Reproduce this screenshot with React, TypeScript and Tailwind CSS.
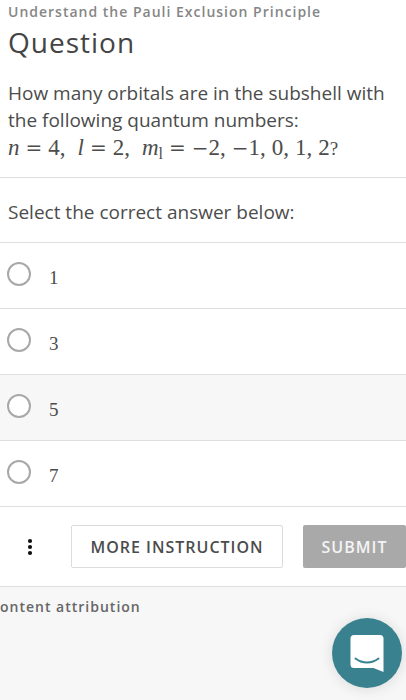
import React, { useState } from 'react';

const answers = ['1', '3', '5', '7'];

const Op: React.FC<{ children: React.ReactNode }> = ({ children }) => (
  <span className="font-['DejaVu_Serif',serif] text-[20px] leading-none">{children}</span>
);

const Quantum: React.FC<{ name: React.ReactNode; children: React.ReactNode }> = ({ name, children }) => (
  <span className="flex items-baseline gap-1.5">
    <span>{name}</span>
    <Op>=</Op>
    <span className="flex items-baseline gap-1.5">{children}</span>
  </span>
);

const App: React.FC = () => {
  const [selected, setSelected] = useState<string | null>(null);

  return (
    <div className="flex min-h-screen flex-col overflow-x-hidden bg-white font-['Open_Sans','Noto_Sans',sans-serif] text-[#4c4c4c]">
      <header className="px-2 pt-1">
        <p className="text-sm leading-4 font-semibold tracking-[1px] text-[#868686]">Understand the Pauli Exclusion Principle</p>
        <h1 className="pt-1 text-[28px] leading-9 tracking-[1px] text-[#444]">Question</h1>
      </header>

      <main>
        <div className="border-b border-[#dedede] px-2 pt-5 pb-4 text-[19px] leading-[27px]">
          <p>How many orbitals are in the subshell with the following quantum numbers:</p>
          <div className="flex h-[27px] items-baseline gap-3 whitespace-nowrap font-['Liberation_Serif',serif] text-[23px]">
            <Quantum name={<i>n</i>}>4,</Quantum>
            <Quantum name={<i>l</i>}>2,</Quantum>
            <Quantum name={<><i>m</i><sub className="text-base leading-none">l</sub></>}>
              <span><Op>−</Op>2,</span>
              <span><Op>−</Op>1,</span>
              <span>0,</span>
              <span>1,</span>
              <span>2<span className="text-[19px]">?</span></span>
            </Quantum>
          </div>
        </div>

        <form onSubmit={e => e.preventDefault()}>
          <fieldset>
            <legend className="flex h-[65px] w-full items-center border-b border-[#dedede] px-2 pt-1 text-[19px]">
              Select the correct answer below:
            </legend>
            {answers.map(a => (
              <label
                key={a}
                className={`flex h-[66px] items-center gap-[18px] border-b border-[#dedede] px-[7px] ${a === '5' ? 'bg-[#f7f7f7]' : ''}`}
              >
                <input
                  type="radio"
                  name="answer"
                  value={a}
                  checked={selected === a}
                  onChange={() => setSelected(a)}
                  className="mb-1 size-6 appearance-none rounded-full border-2 border-[#a8a8a8] bg-white checked:border-[7px]"
                />
                <span className="pt-1.5 font-['Liberation_Serif',serif] text-[19px]">{a}</span>
              </label>
            ))}
          </fieldset>

          <div className="flex h-20 items-center border-b border-[#dedede] text-base">
            <button type="button" aria-label="More options" className="flex w-[71px] shrink-0 justify-center pr-3">
              <svg width="6" height="18" viewBox="0 0 6 18" fill="#111">
                <circle cx="3" cy="3" r="2.1" />
                <circle cx="3" cy="9" r="2.1" />
                <circle cx="3" cy="15" r="2.1" />
              </svg>
            </button>
            <button type="button" className="h-[43px] grow whitespace-nowrap rounded-xs border border-[#dcdcdc] font-semibold tracking-[1px]">
              MORE INSTRUCTION
            </button>
            <button type="submit" className="ml-5 h-[43px] w-[103px] shrink-0 rounded-xs bg-[#a9a9a9] font-semibold tracking-[1px] text-[#f4f4f4]">
              SUBMIT
            </button>
          </div>
        </form>
      </main>

      <footer className="grow bg-[#f7f7f7] pt-2.5">
        <a href="#attribution" className="block text-sm font-semibold tracking-[1px] text-[#666]">ontent attribution</a>
      </footer>

      <button
        type="button"
        aria-label="Open chat"
        className="fixed right-1 bottom-3 flex size-[70px] items-center justify-center rounded-full bg-[#39818f] shadow-[0_1px_14px_rgba(0,0,0,0.12)]"
      >
        <svg width="34" height="38" viewBox="0 0 34 38" fill="none">
          <path d="M4 1h26a3.500 3.500 0 0 1 3.500 3.500V38l-10-4H4a3.500 3.500 0 0 1-3.500-3.500v-26A3.500 3.500 0 0 1 4 1Z" fill="#fff" />
          <path d="M5.500 24.500c7 5.300 16 5.300 23 0" stroke="#39818f" strokeWidth="2" strokeLinecap="round" />
        </svg>
      </button>
    </div>
  );
};

export default App;
